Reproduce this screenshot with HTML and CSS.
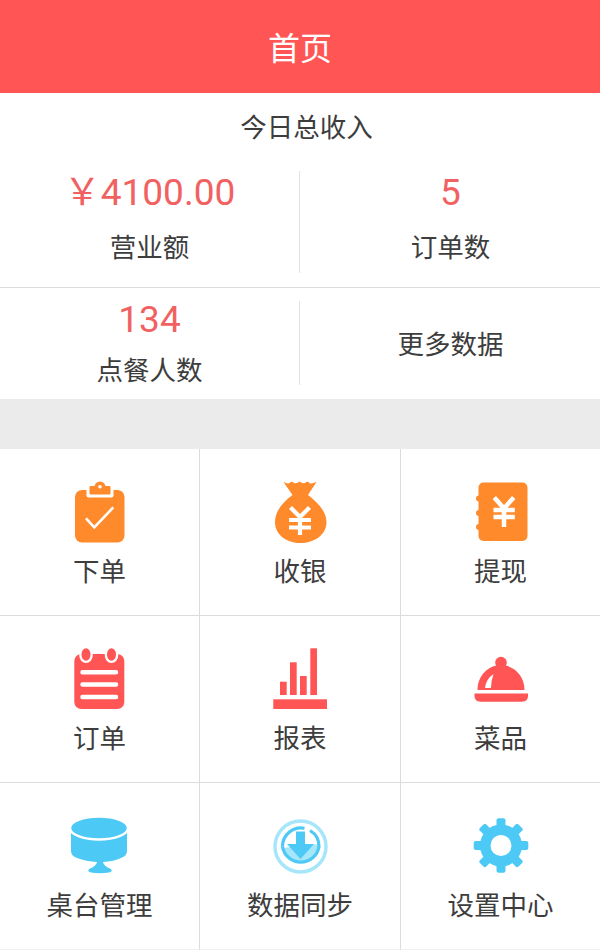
FILE: index.html
```html
<!DOCTYPE html>
<html>

<head>
    <meta name='viewport' content='width=device-width, initial-scale=1'>
    <title>首页</title>
    <link rel="stylesheet" href="styles.css">
</head>

<body>
    <header class="header">首页</header>

    <section class="summary">
        <div class="summary-title">今日总收入</div>
        <div class="stats stats-first">
            <div class="stat">
                <div class="stat-num">￥4100.00</div>
                <div class="stat-label">营业额</div>
            </div>
            <div class="stat">
                <div class="stat-num">5</div>
                <div class="stat-label">订单数</div>
            </div>
        </div>
        <div class="stats stats-second">
            <div class="stat">
                <div class="stat-num">134</div>
                <div class="stat-label">点餐人数</div>
            </div>
            <div class="stat">
                <div class="stat-label stat-more">更多数据</div>
            </div>
        </div>
    </section>

    <div class="spacer"></div>

    <section class="menu">
        <div class="menu-item">
            <svg class="icon orange" viewBox="0 0 64 64">
                <rect x="7" y="10" width="49.5" height="52.5" rx="7" fill="currentColor" />
                <rect x="18.5" y="5" width="27" height="12.5" rx="2" fill="#fff" />
                <rect x="21.5" y="6" width="21" height="8.5" rx="1" fill="currentColor" />
                <circle cx="32" cy="7" r="5.5" fill="currentColor" />
                <circle cx="32" cy="6.8" r="1.8" fill="#fff" />
                <path d="M18 38.3 L26.3 47.3 L45.3 27.3" fill="none" stroke="#fff" stroke-width="2.500" />
            </svg>
            <span class="menu-label">下单</span>
        </div>
        <div class="menu-item">
            <svg class="icon orange" viewBox="0 0 64 64">
                <path d="M15.500 2 Q19 3.500 21 3.500 Q23 0.500 26 3 Q28.500 4 31.500 1.500 Q34.500 4 37 3 Q40 0.500 42 3.500 Q44 3.500 48.500 2 L40 15 C49 22 58.500 31 58.500 42 C58.500 55 46 63 32.500 63 C19 63 7 55 7 42 C7 31 15 22 24.500 15 Z" fill="currentColor" />
                <path d="M22.500 27.500 L32 37 L41.500 27.500 M32 37 V55 M21 40 H43 M21 47.500 H43" fill="none" stroke="#fff" stroke-width="4.200" />
            </svg>
            <span class="menu-label">收银</span>
        </div>
        <div class="menu-item">
            <svg class="icon orange" viewBox="0 0 64 64">
                <circle cx="10" cy="18.500" r="3" fill="currentColor" />
                <circle cx="10" cy="33" r="3" fill="currentColor" />
                <circle cx="10" cy="47" r="3" fill="currentColor" />
                <rect x="9.500" y="2.500" width="49" height="58.500" rx="5" fill="currentColor" />
                <path d="M25.300 17.500 L35 28.500 L44.700 17.500 M35 28.500 V47 M24.500 30 H45.800 M24.500 37 H45.800" fill="none" stroke="#fff" stroke-width="4.500" />
            </svg>
            <span class="menu-label">提现</span>
        </div>

        <div class="menu-item">
            <svg class="icon red" viewBox="0 0 64 64">
                <rect x="6.300" y="7" width="50" height="55" rx="7" fill="currentColor" />
                <ellipse cx="18" cy="8" rx="6.800" ry="8" fill="#fff" />
                <ellipse cx="43.500" cy="8" rx="6.800" ry="8" fill="#fff" />
                <ellipse cx="18" cy="7.500" rx="4.500" ry="6.200" fill="currentColor" />
                <ellipse cx="43.500" cy="7.500" rx="4.500" ry="6.200" fill="currentColor" />
                <path d="M14.500 25.300 H48 M14.500 37.500 H48 M14.500 50 H48" fill="none" stroke="#fff" stroke-width="4.500" stroke-linecap="round" />
            </svg>
            <span class="menu-label">订单</span>
        </div>
        <div class="menu-item">
            <svg class="icon red" viewBox="0 0 64 64">
                <rect x="12" y="34.700" width="6.700" height="13.300" fill="currentColor" />
                <rect x="22" y="15.300" width="6.700" height="32.700" fill="currentColor" />
                <rect x="32" y="29" width="6.700" height="19" fill="currentColor" />
                <rect x="42.300" y="1.300" width="6.700" height="46.700" fill="currentColor" />
                <rect x="5.300" y="52.300" width="53.700" height="9.700" fill="currentColor" />
            </svg>
            <span class="menu-label">报表</span>
        </div>
        <div class="menu-item">
            <svg class="icon red" viewBox="0 0 64 64">
                <circle cx="32" cy="15.500" r="5.800" fill="currentColor" />
                <path d="M8.500 43 C8.500 28 20 18 32 18 C44 18 55.500 28 55.500 43 Z" fill="currentColor" />
                <path d="M16 41 Q17 32 24.500 27 Q22 34 22 41 Z" fill="#fff" />
                <path d="M5.500 46.500 H59 V49 Q59 54.700 53 54.700 H11.500 Q5.500 54.700 5.500 49 Z" fill="currentColor" />
            </svg>
            <span class="menu-label">菜品</span>
        </div>

        <div class="menu-item">
            <svg class="icon blue" viewBox="0 0 64 64">
                <path d="M3 14 V37 Q3 42 9 44 Q18 47.500 29 48 Q28.500 52 21 55 Q19 57.500 23 58.500 Q32 60 41 58.500 Q45 57.500 43 55 Q35.500 52 35 48 Q46 47.500 53 44 Q59 42 59 37 V14 Z" fill="currentColor" />
                <ellipse cx="31" cy="14" rx="29" ry="11.500" fill="currentColor" stroke="#fff" stroke-width="2.500" />
            </svg>
            <span class="menu-label">桌台管理</span>
        </div>
        <div class="menu-item">
            <svg class="icon blue" viewBox="0 0 64 64">
                <circle cx="32.500" cy="32.500" r="25.500" fill="none" stroke="#a6e6fb" stroke-width="3.500" />
                <path d="M14.500 34 A18.500 18.500 0 0 0 51 30 Z" fill="#a6e6fb" />
                <path d="M14.500 32.700 A18.500 18.500 0 0 0 51 32.700 A18.500 18.500 0 0 0 42 16.500" fill="none" stroke="currentColor" stroke-width="3.200" />
                <path d="M36.500 14.300 A18.500 18.500 0 0 0 14.500 32.700" fill="none" stroke="currentColor" stroke-width="3.200" />
                <path d="M28 17.500 H37 V30 H46 L32.500 45 L19 30 H28 Z" fill="currentColor" />
            </svg>
            <span class="menu-label">数据同步</span>
        </div>
        <div class="menu-item">
            <svg class="icon blue" viewBox="0 0 64 64">
                <g fill="currentColor">
                    <circle cx="32" cy="31.500" r="21" />
                    <rect x="27.500" y="4.200" width="9" height="54.600" rx="2" />
                    <rect x="27.500" y="4.200" width="9" height="54.600" rx="2" transform="rotate(45 32 31.500)" />
                    <rect x="27.500" y="4.200" width="9" height="54.600" rx="2" transform="rotate(90 32 31.500)" />
                    <rect x="27.500" y="4.200" width="9" height="54.600" rx="2" transform="rotate(135 32 31.500)" />
                </g>
                <circle cx="32" cy="31.500" r="10.500" fill="#fff" />
            </svg>
            <span class="menu-label">设置中心</span>
        </div>
    </section>
</body>

</html>
```

FILE: styles.css
```css
body {
    margin: 0;
    width: 600px;
    height: 950px;
    overflow: hidden;
    background: #fff;
    color: #3d3d3d;
    font-family: Roboto, "Noto Sans CJK SC", sans-serif;
}

.header {
    height: 93px;
    padding-bottom: 2px;
    box-sizing: border-box;
    display: flex;
    align-items: center;
    justify-content: center;
    background: #ff5555;
    color: #fff;
    font-size: 32px;
}

.summary-title {
    height: 65px;
    margin-bottom: 13px;
    padding-left: 13px;
    display: flex;
    align-items: center;
    justify-content: center;
    font-size: 26.500px;
}

.stats {
    display: grid;
    grid-template-columns: 299px 301px;
}

.stats-first {
    padding-bottom: 14px;
    border-bottom: 1px solid #dcdcdc;
}

.stats-first .stat {
    height: 102px;
    gap: 21px;
    padding-bottom: 3px;
    box-sizing: border-box;
}

.stats-second {
    padding-top: 13px;
    padding-bottom: 14px;
}

.stats-second .stat {
    height: 84px;
    gap: 17px;
    padding-top: 5px;
    box-sizing: border-box;
}

.stat {
    display: flex;
    flex-direction: column;
    align-items: center;
    justify-content: center;
}

.stat + .stat {
    padding-left: 1px;
    border-left: 1px solid #e3e3e3;
}

.stat-num {
    line-height: 34px;
    font-size: 37px;
    color: #f16161;
}

.stat-label {
    line-height: 34px;
    font-size: 26.500px;
}

.stat-more {
    margin-bottom: 2px;
}

.spacer {
    height: 50px;
    background: #ebebeb;
}

.menu {
    display: grid;
    grid-template-columns: 200px 201px 199px;
    grid-auto-rows: 167px;
}

.menu-item {
    box-sizing: border-box;
    padding-top: 31px;
    display: flex;
    flex-direction: column;
    align-items: center;
    border-right: 1px solid #dcdcdc;
    border-bottom: 1px solid #dcdcdc;
}

.menu-item:nth-child(3n) {
    border-right: 0;
}

.menu-item:nth-last-child(-n+3) {
    border-bottom-color: #f0f0f0;
}

.menu-label {
    margin-top: 10px;
    line-height: 36px;
    font-size: 26.500px;
}

.icon {
    display: block;
    width: 64px;
    height: 64px;
}

.orange {
    color: #ff8a2b;
}

.red {
    color: #ff5555;
}

.blue {
    color: #4dc9f6;
}
```
